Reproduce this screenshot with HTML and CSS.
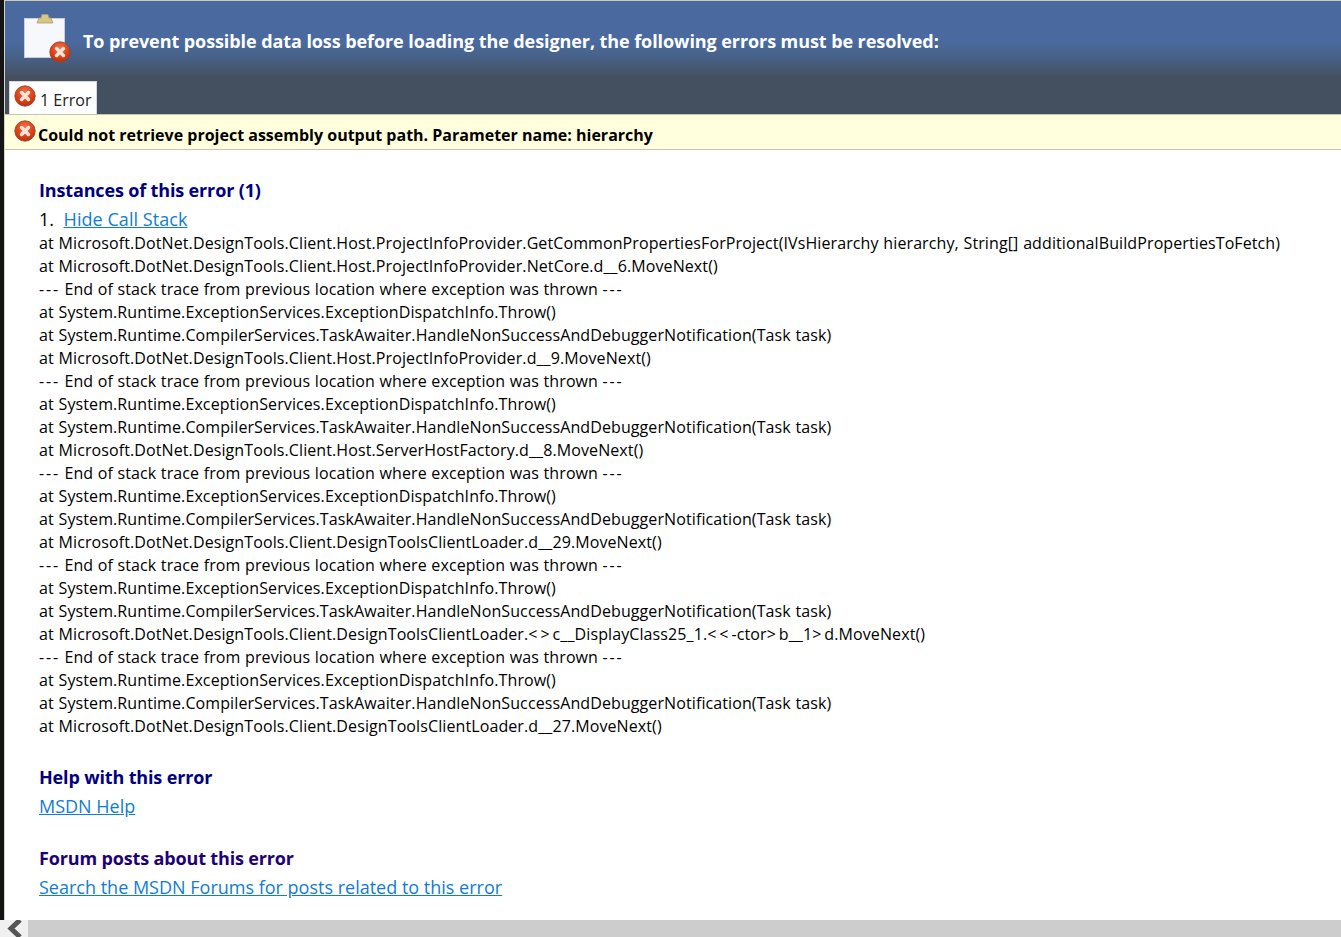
FILE: index.html
```html
<!DOCTYPE html>
<html lang="en">
<head>
<meta charset="utf-8">
<title>Error</title>
<link rel="stylesheet" href="styles.css">
</head>
<body>
<svg class="defs" width="0" height="0" aria-hidden="true">
  <defs>
    <radialGradient id="red" cx="50%" cy="30%" r="72%">
      <stop offset="0" stop-color="#f0724a"/>
      <stop offset="0.55" stop-color="#e04416"/>
      <stop offset="0.85" stop-color="#c8340e"/>
      <stop offset="1" stop-color="#9a2a10"/>
    </radialGradient>
    <filter id="soft" x="-10%" y="-10%" width="120%" height="120%"><feGaussianBlur stdDeviation="0.35"/></filter>
    <symbol id="err" viewBox="0 0 22 22">
      <g filter="url(#soft)">
        <circle cx="11" cy="11" r="10.2" fill="url(#red)" stroke="#8a4a3a" stroke-width="0.9"/>
        <path d="M7.6 7.6L14.4 14.4M14.4 7.6L7.6 14.4" stroke="#fde4da" stroke-width="3.6" stroke-linecap="round"/>
      </g>
    </symbol>
  </defs>
</svg>
<div class="window">
  <div class="main">
    <div class="inner">
      <header class="banner">
        <div class="title-row">
          <span class="clip-icon">
            <svg width="50" height="50" viewBox="0 0 50 50">
              <g filter="url(#soft)">
                <rect x="0.5" y="5.5" width="40" height="39" fill="#f6f8fc" stroke="#c5cfe0"/>
                <path d="M13 10L15 5H17L18 1.5H24L25 5H27L29 10Z" fill="#d4c588" stroke="#ad9e63" stroke-width="0.8"/>
              </g>
            </svg>
            <svg class="clip-badge" width="22" height="22"><use href="#err"/></svg>
          </span>
          <h1 class="title">To prevent possible data loss before loading the designer, the following errors must be resolved:</h1>
        </div>
        <div class="tabs">
          <div class="tab">
            <svg class="tab-icon" width="22" height="22"><use href="#err"/></svg>
            <span>1 Error</span>
          </div>
        </div>
      </header>
      <div class="message">
        <svg class="msg-icon" width="22" height="22"><use href="#err"/></svg>
        <span>Could not retrieve project assembly output path. Parameter name: hierarchy</span>
      </div>
      <div class="content">
        <h2 class="heading">Instances of this error (1)</h2>
        <div class="stack">
          <div class="entry">1.&nbsp; <a href="#">Hide Call Stack</a></div>
          <div>at Microsoft.DotNet.DesignTools.Client.Host.ProjectInfoProvider.GetCommonPropertiesForProject(IVsHierarchy hierarchy, String[] additionalBuildPropertiesToFetch)</div>
          <div>at Microsoft.DotNet.DesignTools.Client.Host.ProjectInfoProvider.NetCore.d__6.MoveNext()</div>
          <div class="sep"><span class="dash">---</span> End of stack trace from previous location where exception was thrown <span class="dash">---</span></div>
          <div>at System.Runtime.ExceptionServices.ExceptionDispatchInfo.Throw()</div>
          <div>at System.Runtime.CompilerServices.TaskAwaiter.HandleNonSuccessAndDebuggerNotification(Task task)</div>
          <div>at Microsoft.DotNet.DesignTools.Client.Host.ProjectInfoProvider.d__9.MoveNext()</div>
          <div class="sep"><span class="dash">---</span> End of stack trace from previous location where exception was thrown <span class="dash">---</span></div>
          <div>at System.Runtime.ExceptionServices.ExceptionDispatchInfo.Throw()</div>
          <div>at System.Runtime.CompilerServices.TaskAwaiter.HandleNonSuccessAndDebuggerNotification(Task task)</div>
          <div>at Microsoft.DotNet.DesignTools.Client.Host.ServerHostFactory.d__8.MoveNext()</div>
          <div class="sep"><span class="dash">---</span> End of stack trace from previous location where exception was thrown <span class="dash">---</span></div>
          <div>at System.Runtime.ExceptionServices.ExceptionDispatchInfo.Throw()</div>
          <div>at System.Runtime.CompilerServices.TaskAwaiter.HandleNonSuccessAndDebuggerNotification(Task task)</div>
          <div>at Microsoft.DotNet.DesignTools.Client.DesignToolsClientLoader.d__29.MoveNext()</div>
          <div class="sep"><span class="dash">---</span> End of stack trace from previous location where exception was thrown <span class="dash">---</span></div>
          <div>at System.Runtime.ExceptionServices.ExceptionDispatchInfo.Throw()</div>
          <div>at System.Runtime.CompilerServices.TaskAwaiter.HandleNonSuccessAndDebuggerNotification(Task task)</div>
          <div>at Microsoft.DotNet.DesignTools.Client.DesignToolsClientLoader.<span class="ang">&lt;&gt;</span>c__DisplayClass25_1.<span class="ang">&lt;&lt;</span>-ctor<span class="ang">&gt;</span>b__1<span class="ang">&gt;</span>d.MoveNext()</div>
          <div class="sep"><span class="dash">---</span> End of stack trace from previous location where exception was thrown <span class="dash">---</span></div>
          <div>at System.Runtime.ExceptionServices.ExceptionDispatchInfo.Throw()</div>
          <div>at System.Runtime.CompilerServices.TaskAwaiter.HandleNonSuccessAndDebuggerNotification(Task task)</div>
          <div>at Microsoft.DotNet.DesignTools.Client.DesignToolsClientLoader.d__27.MoveNext()</div>
        </div>
        <h2 class="heading help-heading">Help with this error</h2>
        <div class="link-row"><a href="#">MSDN Help</a></div>
        <h2 class="heading forum-heading">Forum posts about this error</h2>
        <div class="link-row"><a href="#">Search the MSDN Forums for posts related to this error</a></div>
      </div>
    </div>
  </div>
  <div class="scrollbar">
    <div class="scroll-btn">
      <svg width="16" height="17" viewBox="0 0 16 17"><path d="M14 0L5 8.5L14 17" fill="none" stroke="#555" stroke-width="5"/></svg>
    </div>
    <div class="scroll-thumb"></div>
  </div>
</div>
</body>
</html>
```
FILE: styles.css
```css
* { box-sizing: border-box; }
html, body { margin: 0; padding: 0; height: 100%; overflow: hidden; background: #fff; }
body { font-family: "Open Sans", "Noto Sans", sans-serif; color: #000; }
.defs { position: absolute; }
.window { display: flex; flex-direction: column; width: 1341px; height: 937px; }
.main { flex: 1; min-height: 0; border-left: 4px solid #141414; }
.inner { height: 100%; border-left: 1px solid #d6d2c4; }
.banner {
  height: 114px;
  border-top: 1px solid #cfc8b8;
  display: flex;
  flex-direction: column;
  background: linear-gradient(to bottom, #4a6a9f 0, #4a6a9f 40px, #48648f 52px, #44505f 77px, #44505f 100%);
}
.title-row { height: 80px; display: flex; align-items: center; padding-left: 19px; }
.clip-icon { position: relative; width: 59px; height: 50px; flex: none; margin-top: -6px; }
.clip-badge { position: absolute; left: 25px; top: 28px; }
.title { margin: -1px 0 0; font-size: 18px; font-weight: 700; color: #fff; white-space: nowrap; letter-spacing: -0.08px; }
.tabs { flex: 1; display: flex; align-items: flex-end; padding-left: 4px; }
.tab {
  width: 88px; height: 33px; background: #fff; border: 1px solid #d8d8d8; border-bottom: 0;
  display: flex; align-items: flex-end; padding: 0 0 3px 5px; font-size: 16px; color: #222; position: relative;
}
.tab span { margin-left: 25px; line-height: 22px; }
.tab-icon { position: absolute; left: 4px; top: 3px; }
.message {
  height: 36px; background: #ffffdd; border-top: 1px solid #c8c4b4; border-bottom: 1px solid #c8c4b4;
  display: flex; align-items: center; font-size: 16px; font-weight: 700; color: #000; position: relative; padding: 5px 0 0 33px; white-space: nowrap;
}
.msg-icon { position: absolute; left: 9px; top: 5px; }
.content { padding: 28px 0 0 34px; }
.heading { margin: 0; font-size: 18px; line-height: 25px; font-weight: 700; color: #000080; letter-spacing: -0.15px; }
.stack { margin-top: 5px; font-size: 16px; line-height: 23px; color: #000; white-space: nowrap; letter-spacing: 0.1px; word-spacing: 0.5px; }
.sep { word-spacing: 0.3px; }
.dash { letter-spacing: 1.8px; }
.ang { letter-spacing: 3px; }
.entry { font-size: 18px; line-height: 22px; padding-bottom: 2px; letter-spacing: 0.05px; word-spacing: 0; }
a { color: #0f7dd1; text-decoration: underline; }
.link-row { font-size: 18px; line-height: 25px; margin-top: 4px; }
.help-heading { margin-top: 27px; }
.forum-heading { margin-top: 27px; color: #1e0078; }
.scrollbar { height: 17px; flex: none; display: flex; background: #ccc; }
.scroll-btn { width: 28px; background: #f0f0f0; display: flex; align-items: center; padding-left: 6px; overflow: hidden; }
.scroll-thumb { flex: 1; background: #cdcdcd; }
```
